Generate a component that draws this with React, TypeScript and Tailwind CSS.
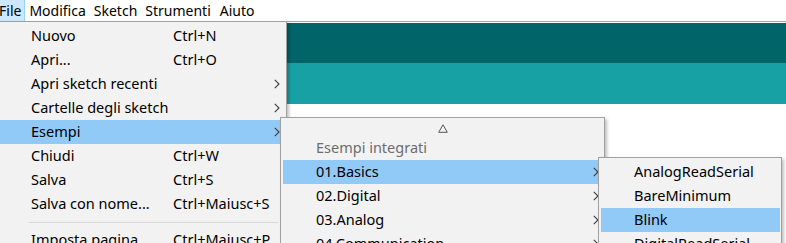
import React from "react";

const font = { fontFamily: '"Noto Sans", "Open Sans", sans-serif' };

function Chevron() {
  return (
    <svg width="6" height="10" viewBox="0 0 6 10" className="block">
      <polyline points="0.8,0.8 5,5 0.8,9.2" fill="none" stroke="#3c3c3c" strokeWidth="1.1" />
    </svg>
  );
}

type Item = { label: string; shortcut?: string; sub?: boolean; active?: boolean; sep?: boolean };

const fileItems: Item[] = [
  { label: "Nuovo", shortcut: "Ctrl+N" },
  { label: "Apri...", shortcut: "Ctrl+O" },
  { label: "Apri sketch recenti", sub: true },
  { label: "Cartelle degli sketch", sub: true },
  { label: "Esempi", sub: true, active: true },
  { label: "Chiudi", shortcut: "Ctrl+W" },
  { label: "Salva", shortcut: "Ctrl+S" },
  { label: "Salva con nome...", shortcut: "Ctrl+Maiusc+S" },
  { label: "", sep: true },
  { label: "Imposta pagina", shortcut: "Ctrl+Maiusc+P" },
];

export default function App() {
  return (
    <div className="relative w-[786px] h-[243px] overflow-hidden bg-white text-black" style={font}>
      {/* menubar */}
      <div className="flex h-[22px] items-stretch border-b border-[#a0a0a0] text-[14px] leading-none bg-white">
        <div className="ml-[-5px] flex items-center pl-[4px] pr-[3px] bg-[#cce8ff] border-r border-[#99d1ff]">File</div>
        <div className="flex items-center pl-[4px] pr-[4px]">Modifica</div>
        <div className="flex items-center px-[4px]">Sketch</div>
        <div className="flex items-center px-[4px]">Strumenti</div>
        <div className="flex items-center px-[5px]">Aiuto</div>
      </div>
      <div className="h-[1px] bg-white" />
      <div className="h-[40px] bg-[#006468]" />
      <div className="h-[41px] bg-[#17a1a5]" />

      {/* File menu */}
      <div className="absolute left-[-3px] top-[21px] w-[290px] h-[240px] bg-[#f2f2f2] border border-[#a0a0a0] pt-[2px] text-[14.5px] shadow-[2px_2px_3px_rgba(0,0,0,0.25)]">
        {fileItems.map((it, i) =>
          it.sep ? (
            <div key={i} className="h-[12px] flex items-center pl-[29px] pr-[6px] mx-[2px]">
              <div className="h-px w-full bg-[#d7d7d7]" />
            </div>
          ) : (
            <div
              key={i}
              className={`h-[24px] mx-[2px] flex items-center pl-[31px] relative ${it.active ? "bg-[#91c9f7]" : ""}`}
            >
              <span className="w-[142px] whitespace-nowrap">{it.label}</span>
              {it.shortcut && <span className="whitespace-nowrap">{it.shortcut}</span>}
              {it.sub && (
                <span className="absolute right-[4px] top-[7px]">
                  <Chevron />
                </span>
              )}
            </div>
          )
        )}
      </div>

      {/* Esempi submenu */}
      <div className="absolute left-[280px] top-[117px] w-[325px] h-[140px] bg-[#f2f2f2] border border-[#a0a0a0] pt-[2px] text-[14.5px] shadow-[2px_2px_3px_rgba(0,0,0,0.25)]">
        <div className="h-[16px] flex items-center justify-center">
          <svg width="10" height="9" viewBox="0 0 10 9">
            <polygon points="5,0.8 9.3,8.3 0.7,8.3" fill="none" stroke="#555" strokeWidth="1" />
          </svg>
        </div>
        <div className="h-[24px] mx-[2px] flex items-center pl-[33px] text-[#6d6d6d]">Esempi integrati</div>
        {["01.Basics", "02.Digital", "03.Analog", "04.Communication"].map((l, i) => (
          <div key={l} className={`h-[24px] mx-[2px] flex items-center pl-[33px] relative ${i === 0 ? "bg-[#91c9f7]" : ""}`}>
            <span>{l}</span>
            <span className="absolute right-[3px] top-[7px]">
              <Chevron />
            </span>
          </div>
        ))}
      </div>

      {/* Basics submenu */}
      <div className="absolute left-[598px] top-[157px] w-[184px] h-[110px] bg-[#f2f2f2] border border-[#a0a0a0] pt-[2px] text-[14.5px] shadow-[2px_2px_3px_rgba(0,0,0,0.25)]">
        {["AnalogReadSerial", "BareMinimum", "Blink", "DigitalReadSerial"].map((l) => (
          <div key={l} className={`h-[24px] ml-[2px] mr-[1px] flex items-center pl-[33px] ${l === "Blink" ? "bg-[#91c9f7]" : ""}`}>
            {l}
          </div>
        ))}
      </div>
    </div>
  );
}
